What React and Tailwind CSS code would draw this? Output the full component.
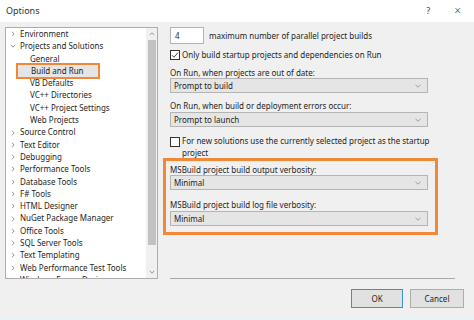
import React from "react";

const tree = [
  { label: "Environment", level: 0, open: false },
  { label: "Projects and Solutions", level: 0, open: true },
  { label: "General", level: 1 },
  { label: "Build and Run", level: 1, selected: true },
  { label: "VB Defaults", level: 1 },
  { label: "VC++ Directories", level: 1 },
  { label: "VC++ Project Settings", level: 1 },
  { label: "Web Projects", level: 1 },
  { label: "Source Control", level: 0 },
  { label: "Text Editor", level: 0 },
  { label: "Debugging", level: 0 },
  { label: "Performance Tools", level: 0 },
  { label: "Database Tools", level: 0 },
  { label: "F# Tools", level: 0 },
  { label: "HTML Designer", level: 0 },
  { label: "NuGet Package Manager", level: 0 },
  { label: "Office Tools", level: 0 },
  { label: "SQL Server Tools", level: 0 },
  { label: "Text Templating", level: 0 },
  { label: "Web Performance Test Tools", level: 0 },
  { label: "Windows Forms Designer", level: 0 },
];

function Chevron({ down, className = "" }) {
  return (
    <svg width="6" height="6" viewBox="0 0 6 6" className={className}>
      {down ? (
        <path d="M0.8 1.8 L3 4.2 L5.2 1.8" fill="none" stroke="#8a8a8a" strokeWidth="0.9" />
      ) : (
        <path d="M2 0.8 L4.2 3 L2 5.2" fill="none" stroke="#8a8a8a" strokeWidth="0.9" />
      )}
    </svg>
  );
}

function Dropdown({ value }) {
  return (
    <div className="w-[258px] h-[15px] bg-[#e5e5e5] border border-[#b4b4b4] flex items-center justify-between pl-[3px] pr-[6px]">
      <span className="leading-[13px]">{value}</span>
      <svg width="6" height="4" viewBox="0 0 6 4">
        <path d="M0.5 0.8 L3 3.2 L5.5 0.8" fill="none" stroke="#8a8a8a" strokeWidth="0.8" />
      </svg>
    </div>
  );
}

function Checkbox({ checked }) {
  return (
    <div className="w-[10px] h-[10px] bg-white border border-[#333] flex items-center justify-center shrink-0">
      {checked && (
        <svg width="8" height="8" viewBox="0 0 8 8">
          <path d="M1 4.2 L3 6.2 L7 1.6" fill="none" stroke="#333" strokeWidth="0.9" />
        </svg>
      )}
    </div>
  );
}

export default function App() {
  return (
    <div className="w-[474px] h-[320px] flex flex-col overflow-hidden text-[8px] text-[#1e1e1e] font-['Noto_Sans','Open_Sans',sans-serif]">
      {/* title bar */}
      <div className="h-[22px] bg-white flex items-center shrink-0">
        <span className="pl-[6px] text-[9px] text-[#333]">Options</span>
        <span className="ml-auto text-[9px] text-[#444]">?</span>
        <span className="ml-[24px] mr-[13px] text-[12px] leading-none font-light text-[#444]">×</span>
      </div>

      {/* body */}
      <div className="flex-1 bg-[#f0f0f0] flex flex-col">
        <div className="flex pt-[5px] pl-[5px]">
          {/* tree panel */}
          <div className="w-[153px] h-[252px] bg-white border border-[#adadad] flex">
            <div className="flex-1 overflow-hidden">
              {tree.map((item) => (
                <div key={item.label} className="h-[12.3px] leading-[12.3px] flex items-center whitespace-nowrap">
                  {item.level === 0 ? (
                    <>
                      <span className="w-[14px] pl-[4px] flex items-center">
                        <Chevron down={item.open} />
                      </span>
                      <span>{item.label}</span>
                    </>
                  ) : item.selected ? (
                    <span className="ml-[10px] pl-[13px] w-[84px] h-[16px] leading-[12px] bg-[#e5e5e5] border-2 border-[#f0883a] flex items-center">
                      {item.label}
                    </span>
                  ) : (
                    <span className="pl-[24px]">{item.label}</span>
                  )}
                </div>
              ))}
            </div>
            {/* scrollbar */}
            <div className="w-[11px] bg-[#f0f0f0] flex flex-col items-center">
              <div className="h-[12px] flex items-center justify-center">
                <Chevron down={false} className="-rotate-90" />
              </div>
              <div className="w-[8px] h-[205px] bg-[#c2c2c2]"></div>
              <div className="flex-1"></div>
              <div className="h-[12px] flex items-center justify-center">
                <Chevron down />
              </div>
            </div>
          </div>

          {/* right column */}
          <div className="ml-[5px] w-[292px] h-[252px] flex flex-col">
            <div className="pl-[7px] h-[17px] flex items-center">
              <div className="w-[34px] h-[17px] bg-white border border-[#b4b4b4] flex items-center pl-[4px]">4</div>
              <span className="ml-[5px]">maximum number of parallel project builds</span>
            </div>
            <div className="pl-[7px] mt-[4px] h-[14px] flex items-center gap-[2px]">
              <Checkbox checked />
              <span>Only build startup projects and dependencies on Run</span>
            </div>
            <div className="pl-[7px] mt-[5px] h-[12px] leading-[12px]">On Run, when projects are out of date:</div>
            <div className="pl-[7px] mt-[-1px]">
              <Dropdown value="Prompt to build" />
            </div>
            <div className="pl-[7px] mt-[7px] h-[12px] leading-[12px]">On Run, when build or deployment errors occur:</div>
            <div className="pl-[7px]">
              <Dropdown value="Prompt to launch" />
            </div>
            <div className="pl-[7px] mt-[10px] flex gap-[2px]">
              <Checkbox />
              <span className="leading-[12px] -mt-[2px] w-[250px]">
                For new solutions use the currently selected project as the startup project
              </span>
            </div>
            <div className="mt-[-1px] w-[275px] h-[77px] border-[3px] border-[#f0883a] pl-[4px] pt-[3px]">
              <div className="h-[12px] leading-[12px]">MSBuild project build output verbosity:</div>
              <div className="mt-[-1px]">
                <Dropdown value="Minimal" />
              </div>
              <div className="mt-[9px] h-[12px] leading-[12px]">MSBuild project build log file verbosity:</div>
              <Dropdown value="Minimal" />
            </div>
            <div className="mt-auto ml-[7px] h-px bg-[#a8a8a8]"></div>
          </div>
        </div>

        {/* buttons */}
        <div className="flex justify-end gap-[7px] pr-[10px] mt-[10px]">
          <div className="w-[52px] h-[19px] bg-[#e1e1e1] border-[1.5px] border-[#3c8ed6] flex items-center justify-center">OK</div>
          <div className="w-[54px] h-[19px] bg-[#e1e1e1] border border-[#adadad] flex items-center justify-center">Cancel</div>
        </div>
        <div className="mt-auto h-[2px] bg-[#e6f6f8]"></div>
      </div>
    </div>
  );
}
